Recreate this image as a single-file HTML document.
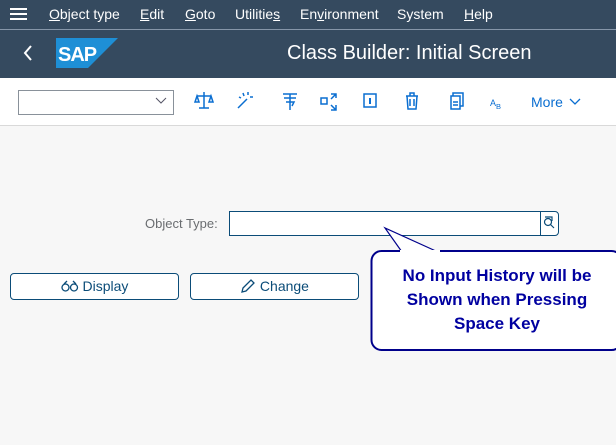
<!DOCTYPE html>
<html><head><style>
body{margin:0;width:616px;height:445px;background:#f7f7f7;font-family:"Liberation Sans",sans-serif;position:relative;overflow:hidden}
.menu{position:absolute;left:0;top:0;width:616px;height:29px;background:#354a5f;border-bottom:1px solid #8696a9;color:#fff;font-size:14px}
.menu span{position:absolute;top:6px}
.title{position:absolute;left:0;top:30px;width:616px;height:48px;background:#354a5f;color:#fff}
.tb{position:absolute;left:0;top:78px;width:616px;height:47px;background:#fff;border-bottom:1px solid #d9d9d9}
.ic{position:absolute;top:92px}
.btn{position:absolute;top:273px;height:25px;background:#fff;border:1px solid #0b4c78;border-radius:4px;color:#0b4c78;font-size:14px;text-align:center;line-height:25px}
</style></head><body>
<div class="menu">
<div style="position:absolute;left:10px;top:8px;width:17px;height:2px;background:#fff;box-shadow:0 5px 0 #fff,0 10px 0 #fff"></div>
<span style="left:49px"><u>O</u>bject type</span>
<span style="left:140px"><u>E</u>dit</span>
<span style="left:185px"><u>G</u>oto</span>
<span style="left:235px">Utilitie<u>s</u></span>
<span style="left:300px">En<u>v</u>ironment</span>
<span style="left:397px">System</span>
<span style="left:464px"><u>H</u>elp</span>
</div>
<div class="title">
<svg style="position:absolute;left:22px;top:14px" width="12" height="18"><path d="M9 2 L3 9 L9 16" stroke="#fff" stroke-width="2" fill="none"/></svg>
<svg style="position:absolute;left:56px;top:8px" width="62" height="30"><polygon points="0,0 62,0 32,30 0,30" fill="#1e8fd6"/><text x="2" y="23" font-family="Liberation Sans" font-weight="bold" font-size="20" fill="#fff" letter-spacing="-1">SAP</text></svg>
<div style="position:absolute;left:287px;top:12px;font-size:20px">Class Builder: Initial Screen</div>
</div>
<div class="tb"></div>
<div style="position:absolute;left:18px;top:90px;width:154px;height:23px;border:1px solid #89919a;background:#fff"></div>
<svg style="position:absolute;left:155px;top:97px" width="12" height="8"><path d="M1 1 L6 6 L11 1" stroke="#556" fill="none"/></svg>
<svg style="position:absolute;left:0;top:88px" width="616" height="30" fill="none" stroke="#0a6ed1" stroke-width="1.5">
<path d="M204 4 V20 M199 20 H209 M197 8 H211 M197 8 L195 14 H199 Z M211 8 L209 14 H213 Z"/>
<path d="M238 20 L247 11 M243 5 L244 8 M248 4 L248 7 M250 9 L253 9 M239 9 L241 10"/>
<path d="M283 6 H297 M284 10 H296 M290 6 V22 M286 14 H294 L292 18"/>
<path d="M321 10 H327 V16 H321 Z M331 6 H336 V10 M336 6 L331 11 M331 22 H336 V17 M336 22 L331 17"/>
<rect x="364" y="6" width="12" height="13"/><path d="M370 10 V16" stroke-width="2"/>
<path d="M406 8 H418 M410 8 V5 H414 V8 M407 8 L408 21 H416 L417 8 M410 11 V18 M414 11 V18"/>
<path d="M451 8 V21 H460 V8 Z M453 8 V5 H463 V18 H460 M453 14 H458 M453 17 H458"/>
</svg>
<span style="position:absolute;left:490px;top:98px;font-size:9px;color:#0a6ed1">A<sub>B</sub></span>
<span style="position:absolute;left:531px;top:94px;font-size:14px;color:#0a6ed1">More</span>
<svg style="position:absolute;left:569px;top:98px" width="12" height="8"><path d="M1 1 L6 6 L11 1" stroke="#0a6ed1" stroke-width="1.3" fill="none"/></svg>
<div style="position:absolute;left:145px;top:216px;font-size:13px;color:#6a6d70">Object Type:</div>
<div style="position:absolute;left:229px;top:211px;width:310px;height:23px;background:#fff;border:1px solid #0b4c78"></div>
<div style="position:absolute;left:540px;top:211px;width:17px;height:23px;background:#fff;border:1px solid #0b4c78;border-radius:0 4px 4px 0"></div>
<svg style="position:absolute;left:542px;top:215px" width="14" height="14" fill="none" stroke="#0b4c78" stroke-width="1.2"><circle cx="6" cy="7" r="3.5"/><path d="M8.5 9.5 L12 13 M3 2 H10 V6"/></svg>
<div class="btn" style="left:10px;width:167px"><svg width="18" height="12" style="vertical-align:-1px" fill="none" stroke="#0b4c78" stroke-width="1.3"><circle cx="4.5" cy="7.5" r="3.5"/><circle cx="13" cy="7.5" r="3.5"/><path d="M3 4 L6 1 M15 4 L12 1"/></svg> Display</div>
<div class="btn" style="left:190px;width:167px"><svg width="16" height="14" style="vertical-align:-2px" fill="none" stroke="#0b4c78" stroke-width="1.3"><path d="M2 13 L3 9 L11 1 L14 4 L6 12 Z"/></svg> Change</div>
<svg style="position:absolute;left:0;top:0" width="616" height="445">
<rect x="371.5" y="251" width="250" height="99" rx="10" fill="#fff" stroke="#00008b" stroke-width="2"/>
<path d="M402 252 L385 228 L438 252" fill="#fff" stroke="#00008b" stroke-width="1.2"/>
<rect x="400" y="250" width="40" height="4" fill="#fff"/>
<text font-family="Liberation Sans" font-weight="bold" font-size="17" fill="#0000a0" text-anchor="middle" textLength="0"><tspan x="497" y="281">No Input History will be</tspan><tspan x="497" y="305">Shown when Pressing</tspan><tspan x="497" y="329">Space Key</tspan></text>
</svg>
</body></html>
